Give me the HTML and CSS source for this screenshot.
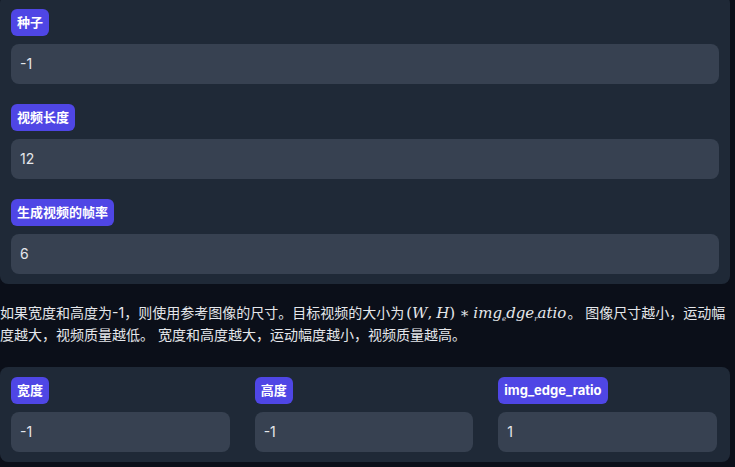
FILE: index.html
```html
<!DOCTYPE html>
<html lang="zh">
<head>
    <meta charset="UTF-8">
    <meta name="viewport" content="width=device-width, initial-scale=1.0">
    <title>视频生成参数</title>
    <link rel="stylesheet" href="styles.css">
</head>
<body>

<div id="app">
    <div class="panel panel-stack">
        <div class="field">
            <span class="badge">种子</span>
            <div class="input">-1</div>
        </div>
        <div class="field">
            <span class="badge">视频长度</span>
            <div class="input">12</div>
        </div>
        <div class="field">
            <span class="badge">生成视频的帧率</span>
            <div class="input">6</div>
        </div>
    </div>

    <p class="note">如果宽度和高度为-1，则使用参考图像的尺寸。目标视频的大小为<span class="math">(<i>W</i>,<span class="sp"></span><i>H</i>)<span class="op">∗</span><i>img<sub>e</sub>dge<sub>r</sub>atio</i></span>。 图像尺寸越小，运动幅度越大，视频质量越低。 宽度和高度越大，运动幅度越小，视频质量越高。</p>

    <div class="panel panel-row">
        <div class="field">
            <span class="badge">宽度</span>
            <div class="input">-1</div>
        </div>
        <div class="field">
            <span class="badge">高度</span>
            <div class="input">-1</div>
        </div>
        <div class="field">
            <span class="badge">img_edge_ratio</span>
            <div class="input">1</div>
        </div>
    </div>
</div>

</body>
</html>
```

FILE: styles.css
```css
body {
    font-family: Inter, "Noto Sans CJK SC", sans-serif;
    margin: 0;
    background-color: #0b0f19;
    color: #e5e7eb;
}
#app {
    width: 730px;
}
.panel {
    background-color: #1f2937;
    border-radius: 8px;
}
.panel-stack {
    display: flex;
    flex-direction: column;
    gap: 20px;
    margin-top: -5px;
    padding: 14px 11px 10px 11px;
}
.panel-row {
    display: grid;
    grid-template-columns: 1fr 1fr 1fr;
    gap: 25px;
    padding: 10px 13px 10px 11px;
}
.field {
    display: flex;
    flex-direction: column;
    align-items: flex-start;
    gap: 8px;
}
.badge {
    background-color: #4f46e5;
    color: white;
    font-weight: 700;
    font-size: 13px;
    line-height: 19px;
    padding: 4px 6px;
    border-radius: 6px;
}
.input {
    align-self: stretch;
    box-sizing: border-box;
    height: 40px;
    line-height: 40px;
    padding: 0 9px;
    background-color: #374151;
    border-radius: 8px;
    font-size: 14px;
    color: #e5e7eb;
}
.note {
    margin: 18px 0 22px 0;
    font-size: 14px;
    line-height: 21px;
    color: #e5e7eb;
}
.math {
    font-family: "DejaVu Serif", "Liberation Serif", serif;
    font-size: 15px;
    margin: 0 1px 0 2px;
}
.math sub {
    display: inline-block;
    font-size: 7px;
    vertical-align: -3px;
    line-height: 7px;
}
.math .sp {
    display: inline-block;
    width: 4px;
}
.math .op {
    margin: 0 4px;
}
```
